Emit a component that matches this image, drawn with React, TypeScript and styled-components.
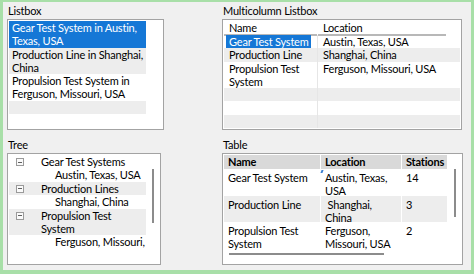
import React from "react";
import styled, { createGlobalStyle } from "styled-components";

const GlobalStyle = createGlobalStyle`
  html, body {
    margin: 0;
    padding: 0;
    background: #f0f0f0;
  }
  * {
    box-sizing: border-box;
  }
`;

const Frame = styled.div`
  width: 474px;
  height: 274px;
  background: #f0f0f0;
  border-style: solid;
  border-color: #a8dfa8;
  border-width: 2px 3px 4px 3px;
  padding: 1px 0 0 4px;
  font-family: Lato, "Noto Sans", sans-serif;
  font-size: 11px;
  letter-spacing: -0.2px;
  color: #000;
  display: grid;
  grid-template-columns: 157px 241px;
  grid-template-rows: 127px 128px;
  column-gap: 58px;
  row-gap: 7px;
`;

const Panel = styled.div`
  display: flex;
  flex-direction: column;
`;

const Label = styled.div`
  height: 16px;
  line-height: 16px;
  padding-left: 1px;
`;

const Box = styled.div<{ $width: number }>`
  position: relative;
  width: ${(p) => p.$width}px;
  flex: 1;
  background: #fff;
  border: 1px solid #a3a3a3;
  padding: 1px;
  overflow: hidden;
`;

const Rows = styled.div<{ $width: number }>`
  width: ${(p) => p.$width}px;
  display: flex;
  flex-direction: column;
`;

const Row = styled.div<{ $lines?: number; $shade?: boolean; $selected?: boolean }>`
  height: ${(p) => (p.$lines ?? 1) * 13.3}px;
  line-height: 13.3px;
  padding-left: 3px;
  white-space: nowrap;
  background: ${(p) => (p.$selected ? "#1577d6" : p.$shade ? "#ededed" : "#fff")};
  color: ${(p) => (p.$selected ? "#fff" : "#000")};
`;

/* multicolumn listbox */
const McHeader = styled.div`
  display: grid;
  grid-template-columns: 93px 128px;
  column-gap: 1px;
  height: 14px;
  line-height: 13px;
`;

const McHeadCell = styled.div`
  padding-left: 5px;
  border-bottom: 2px solid #b8b8b8;
  background: #fff;
`;

const McRow = styled.div<{ $lines?: number; $shade?: boolean }>`
  display: grid;
  grid-template-columns: 93px 1px 127px;
  height: ${(p) => (p.$lines ?? 1) * 13.3}px;
  line-height: 13.3px;
  background: ${(p) => (p.$shade ? "#ededed" : "#fff")};
`;

const McCell = styled.div`
  padding-left: 2px;
  white-space: nowrap;
`;

const McDivider = styled.div`
  background: #e6e6e6;
`;

const Selected = styled.span`
  display: inline-block;
  background: #1577d6;
  color: #fff;
  padding: 0 2px 0 3px;
`;

const Plain = styled.span`
  display: inline-block;
  padding: 0 2px 0 3px;
`;

/* tree */
const TreeRow = styled.div<{ $lines?: number; $shade?: boolean; $child?: boolean }>`
  display: flex;
  align-items: flex-start;
  height: ${(p) => (p.$lines ?? 1) * 13.4}px;
  line-height: 13.4px;
  padding-left: ${(p) => (p.$child ? 46 : 7)}px;
  background: ${(p) => (p.$shade ? "#ededed" : "#fff")};
  white-space: nowrap;
`;

const Toggle = styled.span`
  flex: none;
  position: relative;
  width: 8px;
  height: 8px;
  margin-top: 3px;
  margin-right: 17px;
  border: 1px solid #9a9a9a;
  background: #fafafa;
  &::after {
    content: "";
    position: absolute;
    left: 1px;
    right: 1px;
    top: 2.5px;
    height: 1px;
    background: #606060;
  }
`;

const VScroll = styled.div<{ $left: number; $top: number; $height: number }>`
  position: absolute;
  left: ${(p) => p.$left}px;
  top: ${(p) => p.$top}px;
  width: 2px;
  height: ${(p) => p.$height}px;
  background: #8c8c8c;
`;

const HScroll = styled.div<{ $left: number; $top: number; $width: number }>`
  position: absolute;
  left: ${(p) => p.$left}px;
  top: ${(p) => p.$top}px;
  height: 2px;
  width: ${(p) => p.$width}px;
  background: #8c8c8c;
`;

/* table */
const TableGrid = styled.div`
  display: grid;
  grid-template-columns: 96px 80px 45px;
  column-gap: 1px;
`;

const THead = styled.div`
  background: #d9d9d9;
  font-weight: 700;
  height: 14px;
  line-height: 14px;
  padding-left: 4px;
  white-space: nowrap;
`;

const TCell = styled.div<{ $shade?: boolean }>`
  position: relative;
  background: ${(p) => (p.$shade ? "#ededed" : "#fff")};
  height: 26.6px;
  line-height: 13.3px;
  padding: 2px 0 0 4px;
  white-space: nowrap;
`;

const Cursor = styled.span`
  position: absolute;
  left: 0;
  top: 1px;
  width: 2px;
  height: 3px;
  background: #3b7fd0;
  transform: skewX(-20deg);
`;

const Lines = ({ text }: { text: string[] }) => (
  <>
    {text.map((t, i) => (
      <div key={i}>{t}</div>
    ))}
  </>
);

const tableRows = [
  { name: ["Gear Test System"], location: ["Austin, Texas,", "USA"], stations: "14", cursor: true },
  { name: ["Production Line"], location: ["\u00a0Shanghai,", "China"], stations: "3" },
  { name: ["Propulsion Test", "System"], location: ["Ferguson,", "Missouri, USA"], stations: "2" },
];

export default function App() {
  return (
    <>
      <GlobalStyle />
      <Frame>
        <Panel>
          <Label>Listbox</Label>
          <Box $width={157}>
            <Rows $width={137}>
              <Row $lines={2} $selected>
                <Lines text={["Gear Test System in Austin,", "Texas, USA"]} />
              </Row>
              <Row $lines={2} $shade>
                <Lines text={["Production Line in Shanghai,", "China"]} />
              </Row>
              <Row $lines={2}>
                <Lines text={["Propulsion Test System in", "Ferguson, Missouri, USA"]} />
              </Row>
              <Row $shade />
              <Row />
            </Rows>
          </Box>
        </Panel>

        <Panel>
          <Label>Multicolumn Listbox</Label>
          <Box $width={240}>
            <McHeader>
              <McHeadCell>Name</McHeadCell>
              <McHeadCell>Location</McHeadCell>
            </McHeader>
            <McRow>
              <McCell>
                <Selected>Gear Test System</Selected>
              </McCell>
              <McDivider />
              <McCell>
                <Plain>Austin, Texas, USA</Plain>
              </McCell>
            </McRow>
            <McRow $shade>
              <McCell>
                <Plain>Production Line</Plain>
              </McCell>
              <McDivider />
              <McCell>
                <Plain>Shanghai, China</Plain>
              </McCell>
            </McRow>
            <McRow $lines={2}>
              <McCell>
                <Plain>
                  Propulsion Test
                  <br />
                  System
                </Plain>
              </McCell>
              <McDivider />
              <McCell>
                <Plain>Ferguson, Missouri, USA</Plain>
              </McCell>
            </McRow>
            <McRow $shade>
              <McCell />
              <McDivider />
              <McCell />
            </McRow>
            <McRow>
              <McCell />
              <McDivider />
              <McCell />
            </McRow>
            <McRow $shade>
              <McCell />
              <McDivider />
              <McCell />
            </McRow>
          </Box>
        </Panel>

        <Panel>
          <Label>Tree</Label>
          <Box $width={154}>
            <Rows $width={137}>
              <TreeRow>
                <Toggle />
                Gear Test Systems
              </TreeRow>
              <TreeRow $child>Austin, Texas, USA</TreeRow>
              <TreeRow $shade>
                <Toggle />
                Production Lines
              </TreeRow>
              <TreeRow $child>Shanghai, China</TreeRow>
              <TreeRow $shade $lines={2}>
                <Toggle />
                <div>
                  Propulsion Test
                  <br />
                  System
                </div>
              </TreeRow>
              <TreeRow $child>Ferguson, Missouri,</TreeRow>
            </Rows>
            <VScroll $left={144} $top={15} $height={54} />
          </Box>
        </Panel>

        <Panel>
          <Label>Table</Label>
          <Box $width={241}>
            <TableGrid>
              <THead>Name</THead>
              <THead>Location</THead>
              <THead>Stations</THead>
              {tableRows.map((r, i) => (
                <React.Fragment key={i}>
                  <TCell $shade={i === 1}>
                    <Lines text={r.name} />
                  </TCell>
                  <TCell $shade={i === 1}>
                    {r.cursor && <Cursor />}
                    <Lines text={r.location} />
                  </TCell>
                  <TCell $shade={i === 1}>{r.stations}</TCell>
                </React.Fragment>
              ))}
            </TableGrid>
            <VScroll $left={231} $top={15} $height={48} />
            <HScroll $left={6} $top={99} $width={155} />
          </Box>
        </Panel>
      </Frame>
    </>
  );
}
